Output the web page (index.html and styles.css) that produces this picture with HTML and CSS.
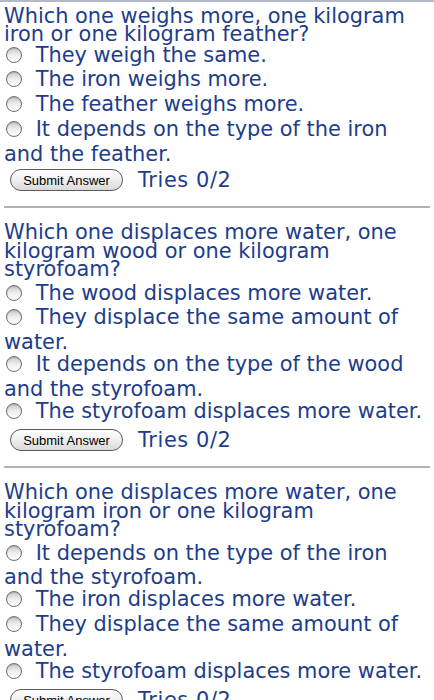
FILE: index.html
```html
<!DOCTYPE html>
<html lang="en">
<head>
<meta charset="utf-8">
<title>Quiz</title>
<link rel="stylesheet" href="styles.css">
</head>
<body>
<div class="top-rule"></div>

<section class="quiz quiz-first">
  <div class="question">Which one weighs more, one kilogram iron or one kilogram feather?</div>
  <div class="options">
    <label class="opt"><input type="radio" class="radio" name="q1"> They weigh the same.</label>
    <label class="opt"><input type="radio" class="radio" name="q1"> The iron weighs more.</label>
    <label class="opt"><input type="radio" class="radio" name="q1"> The feather weighs more.</label>
    <label class="opt"><input type="radio" class="radio" name="q1"> It depends on the type of the iron and the feather.</label>
  </div>
  <div class="submit-row"><button class="submit">Submit Answer</button><span class="tries">Tries 0/2</span></div>
</section>
<hr class="divider">

<section class="quiz">
  <div class="question">Which one displaces more water, one kilogram wood or one kilogram styrofoam?</div>
  <div class="options">
    <label class="opt"><input type="radio" class="radio" name="q2"> The wood displaces more water.</label>
    <label class="opt"><input type="radio" class="radio" name="q2"> They displace the same amount of water.</label>
    <label class="opt"><input type="radio" class="radio" name="q2"> It depends on the type of the wood and the styrofoam.</label>
    <label class="opt"><input type="radio" class="radio" name="q2"> The styrofoam displaces more water.</label>
  </div>
  <div class="submit-row"><button class="submit">Submit Answer</button><span class="tries">Tries 0/2</span></div>
</section>
<hr class="divider">

<section class="quiz">
  <div class="question">Which one displaces more water, one kilogram iron or one kilogram styrofoam?</div>
  <div class="options">
    <label class="opt"><input type="radio" class="radio" name="q3"> It depends on the type of the iron and the styrofoam.</label>
    <label class="opt"><input type="radio" class="radio" name="q3"> The iron displaces more water.</label>
    <label class="opt"><input type="radio" class="radio" name="q3"> They displace the same amount of water.</label>
    <label class="opt"><input type="radio" class="radio" name="q3"> The styrofoam displaces more water.</label>
  </div>
  <div class="submit-row"><button class="submit">Submit Answer</button><span class="tries">Tries 0/2</span></div>
</section>
</body>
</html>
```

FILE: styles.css
```css
html, body {
  margin: 0;
  background: #ffffff;
}
body {
  padding: 0 4px;
  font-family: "DejaVu Sans", Verdana, sans-serif;
  font-size: 20.9px;
  color: #1d3d8a;
  overflow: hidden;
}
.top-rule {
  height: 2px;
  margin: 0 -4px;
  background: #b4b8c8;
}
.question {
  line-height: 18.5px;
  margin-top: 15px;
}
.quiz-first .question {
  margin-top: 4.5px;
}
.options {
  margin-top: 3px;
}
.quiz-first .options {
  margin-top: 0;
}
.opt {
  display: block;
  line-height: 22px;
}
.radio {
  -webkit-appearance: none;
  appearance: none;
  display: inline-block;
  box-sizing: border-box;
  width: 16px;
  height: 16px;
  margin: 0 7px 5.75px 2px;
  vertical-align: -6.75px;
  border: 1px solid #707070;
  border-radius: 50%;
  background: linear-gradient(#c8c8c8 0%, #eeeeee 50%, #ffffff 100%);
  box-shadow: inset 0 1px 1px rgba(0,0,0,0.15);
}
.submit-row {
  display: flex;
  align-items: center;
  margin-top: 4.5px;
}
.submit {
  box-sizing: border-box;
  width: 113px;
  height: 22px;
  margin-left: 6px;
  padding: 0;
  border: 1px solid #5b5b5b;
  border-radius: 11px;
  background: linear-gradient(#ffffff 0%, #f1f1f1 45%, #d9d9d9 100%);
  font-family: "Liberation Sans", Arial, sans-serif;
  font-size: 13px;
  color: #000;
  text-align: center;
}
.tries {
  margin-left: 15px;
  line-height: 22px;
  letter-spacing: 0.6px;
}
.divider {
  height: 0;
  margin: 15px 0 0;
  border: 0;
  border-top: 2px solid #b3b3b3;
}
```
